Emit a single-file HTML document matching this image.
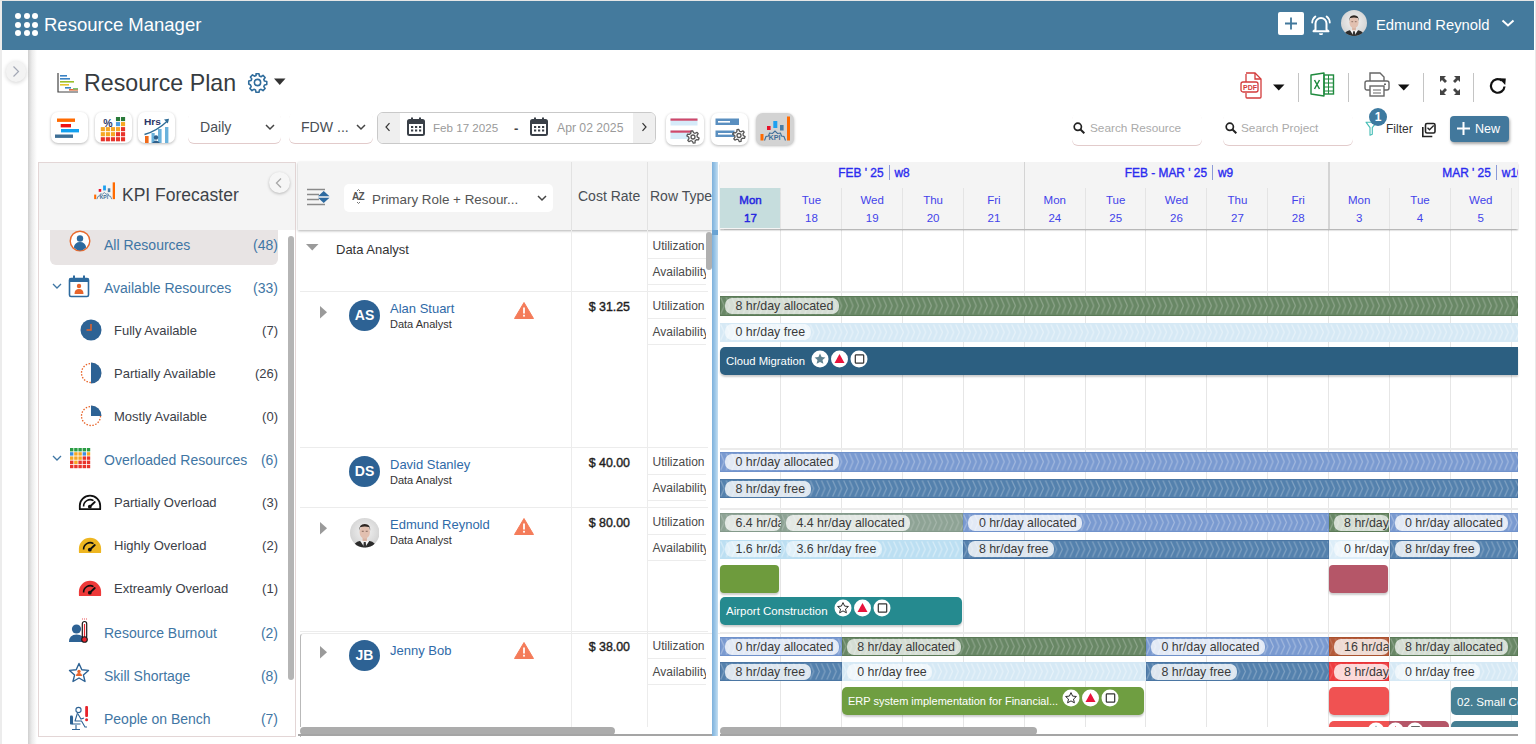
<!DOCTYPE html><html><head><meta charset="utf-8"><style>
*{box-sizing:border-box;margin:0;padding:0}
html,body{width:1536px;height:744px;overflow:hidden;background:#fff;font-family:"Liberation Sans",sans-serif;color:#333}
.a{position:absolute}
.t{position:absolute;white-space:nowrap;line-height:1}
.dot{position:absolute;width:6px;height:6px;border-radius:50%;background:#fff}
.kl{position:absolute;font-size:14px;color:#3f76a4;white-space:nowrap;line-height:1}
.ks{position:absolute;font-size:13px;color:#3b4048;white-space:nowrap;line-height:1}
.tb{position:absolute;border-radius:7px;background:#fff;box-shadow:0 1px 3px rgba(0,0,0,.28)}
.bar{position:absolute;overflow:hidden}
.pill{position:absolute;height:16px;top:2px;left:5px;border-radius:7px;font-size:12.4px;line-height:16px;padding-left:10.5px;padding-right:5.5px;color:#333;white-space:nowrap;overflow:hidden}
.dh{position:absolute;font-size:11.5px;color:#4343ea;text-align:center;width:61px;line-height:1}
</style></head><body><svg width="0" height="0" style="position:absolute"><defs><pattern id="p0" patternUnits="userSpaceOnUse" width="5.6" height="19.5"><path d="M0.6 1.5L4.2 9.75L0.6 18.0" fill="none" stroke="rgba(255,255,255,.24)" stroke-width="1.2"/></pattern><pattern id="p1" patternUnits="userSpaceOnUse" width="5.6" height="18.5"><path d="M0.6 1.5L4.2 9.25L0.6 17.0" fill="none" stroke="rgba(255,255,255,.4)" stroke-width="1.2"/></pattern><pattern id="p2" patternUnits="userSpaceOnUse" width="5.6" height="19.5"><path d="M0.6 1.5L4.2 9.75L0.6 18.0" fill="none" stroke="rgba(255,255,255,.3)" stroke-width="1.2"/></pattern><pattern id="p3" patternUnits="userSpaceOnUse" width="5.6" height="19.0"><path d="M0.6 1.5L4.2 9.5L0.6 17.5" fill="none" stroke="rgba(255,255,255,.26)" stroke-width="1.2"/></pattern><pattern id="p4" patternUnits="userSpaceOnUse" width="5.6" height="19.0"><path d="M0.6 1.5L4.2 9.5L0.6 17.5" fill="none" stroke="rgba(255,255,255,.2)" stroke-width="1.2"/></pattern><pattern id="p5" patternUnits="userSpaceOnUse" width="5.6" height="19.0"><path d="M0.6 1.5L4.2 9.5L0.6 17.5" fill="none" stroke="rgba(255,255,255,.3)" stroke-width="1.2"/></pattern><pattern id="p6" patternUnits="userSpaceOnUse" width="5.6" height="19.0"><path d="M0.6 1.5L4.2 9.5L0.6 17.5" fill="none" stroke="rgba(255,255,255,.24)" stroke-width="1.2"/></pattern><pattern id="p7" patternUnits="userSpaceOnUse" width="5.6" height="18.5"><path d="M0.6 1.5L4.2 9.25L0.6 17.0" fill="none" stroke="rgba(255,255,255,.26)" stroke-width="1.2"/></pattern><pattern id="p8" patternUnits="userSpaceOnUse" width="5.6" height="19.0"><path d="M0.6 1.5L4.2 9.5L0.6 17.5" fill="none" stroke="rgba(255,255,255,.15)" stroke-width="1.2"/></pattern><pattern id="p9" patternUnits="userSpaceOnUse" width="5.6" height="19.0"><path d="M0.6 1.5L4.2 9.5L0.6 17.5" fill="none" stroke="rgba(255,255,255,.4)" stroke-width="1.2"/></pattern></defs></svg><div class="a" style="left:0px;top:0px;width:2px;height:744px;background:#ececec;"></div>
<div class="a" style="left:1535px;top:0px;width:1px;height:744px;background:#e9e9e9;"></div>
<div class="a" style="left:0px;top:0px;width:1536px;height:1px;background:#e6e6e6;"></div>
<div class="a" style="left:2px;top:1px;width:1532px;height:49px;background:#447a9d;"></div>
<div class="dot" style="left:15.0px;top:13.0px"></div>
<div class="dot" style="left:23.5px;top:13.0px"></div>
<div class="dot" style="left:32.0px;top:13.0px"></div>
<div class="dot" style="left:15.0px;top:21.5px"></div>
<div class="dot" style="left:23.5px;top:21.5px"></div>
<div class="dot" style="left:32.0px;top:21.5px"></div>
<div class="dot" style="left:15.0px;top:30.0px"></div>
<div class="dot" style="left:23.5px;top:30.0px"></div>
<div class="dot" style="left:32.0px;top:30.0px"></div>
<div class="t" style="left:44px;top:16px;font-size:18.5px;color:#fff;">Resource Manager</div>
<div class="a" style="left:1278px;top:12px;width:26px;height:23px;background:#fff;border-radius:2px"></div>
<svg class="a" style="left:1278px;top:12px" width="26" height="23"><path d="M13 5.5v12M7 11.5h12" stroke="#42789c" stroke-width="1.8"/></svg>
<svg class="a" style="left:1310px;top:13px" width="22" height="22" viewBox="0 0 22 22"><path d="M5.5 16.5V10.5a5.5 5.5 0 0 1 11 0v6l2 1.8h-15z" fill="none" stroke="#fff" stroke-width="2" stroke-linejoin="round"/><path d="M9 20.2a2 2 0 0 0 4 0z" fill="#fff"/><path d="M2.2 9.5a8 8 0 0 1 3.2-6M19.8 9.5a8 8 0 0 0-3.2-6" fill="none" stroke="#fff" stroke-width="1.8" stroke-linecap="round"/></svg>
<svg class="a" style="left:1341px;top:10px" width="26" height="26" viewBox="0 0 30 30"><defs><clipPath id="av1"><circle cx="15" cy="15" r="15"/></clipPath><radialGradient id="av1g" cx=".5" cy=".45" r=".6"><stop offset="0" stop-color="#f4f4f4"/><stop offset="1" stop-color="#cfcfcf"/></radialGradient></defs><g clip-path="url(#av1)"><rect width="30" height="30" fill="url(#av1g)"/><path d="M3 31q1-6.5 7-7.5l5 1.5 5-1.5q6 1 7 7.5z" fill="#2b2b2b"/><path d="M10.5 23.5l4.5 7 4.5-7-4.5-1.5z" fill="#f5f5f5"/><path d="M14 24.5h2l.6 5.5h-3.2z" fill="#333"/><rect x="12.8" y="19" width="4.4" height="4.5" fill="#d9b3a1"/><ellipse cx="15" cy="14.2" rx="5.3" ry="6.8" fill="#e2c0b0"/><path d="M9.5 13q-.5-6.5 5.5-6.8 6 .3 5.5 6.8l-.8-3.5q-4.7-1.8-9.4 0z" fill="#2e2622"/><path d="M12 13.5h2M16 13.5h2" stroke="#6b5046" stroke-width=".8"/></g></svg>
<div class="t" style="left:1376px;top:17.5px;font-size:14.8px;color:#fff;">Edmund Reynold</div>
<svg class="a" style="left:1501px;top:19px" width="14" height="9"><path d="M1.5 1.5l5.5 5 5.5-5" fill="none" stroke="#fff" stroke-width="2"/></svg>
<div class="a" style="left:28px;top:50px;width:9px;height:694px;background:linear-gradient(90deg,#cfcfcf,#ececec 45%,#fff);"></div>
<div class="a" style="left:5.5px;top:61px;width:20.5px;height:20.5px;border-radius:50%;background:#f3f3f3;box-shadow:0 1px 4px rgba(0,0,0,.18)"></div>
<svg class="a" style="left:12px;top:65px" width="10" height="13"><path d="M1.5 1.5l5 5-5 5" fill="none" stroke="#a3a8b5" stroke-width="1.2"/></svg>
<svg class="a" style="left:57px;top:73px" width="22" height="20" viewBox="0 0 22 20"><path d="M1 0v19h20" fill="none" stroke="#444" stroke-width="1.2"/><rect x="3" y="2" width="7" height="1.6" fill="#3b83c4"/><rect x="3" y="5" width="10" height="1.6" fill="#3b83c4"/><rect x="3" y="8" width="14" height="1.6" fill="#9bbf2a"/><rect x="3" y="11" width="9" height="1.6" fill="#e3c530"/><rect x="8" y="14" width="6" height="1.6" fill="#3b83c4"/><rect x="12" y="16" width="9" height="1.6" fill="#e06a3a"/><rect x="16" y="15" width="5" height="1.6" fill="#7cc576"/></svg>
<div class="t" style="left:84px;top:72px;font-size:23.2px;color:#363b40;">Resource Plan</div>
<svg class="a" style="left:247px;top:72px" width="21" height="21" viewBox="0 0 24 24"><path d="M10.3 2h3.4l.5 2.6 1.9.8 2.2-1.5 2.4 2.4-1.5 2.2.8 1.9 2.6.5v3.4l-2.6.5-.8 1.9 1.5 2.2-2.4 2.4-2.2-1.5-1.9.8-.5 2.6h-3.4l-.5-2.6-1.9-.8-2.2 1.5-2.4-2.4 1.5-2.2-.8-1.9L2 13.7v-3.4l2.6-.5.8-1.9-1.5-2.2 2.4-2.4 2.2 1.5 1.9-.8z" fill="none" stroke="#2f6c9c" stroke-width="1.8" stroke-linejoin="round"/><circle cx="12" cy="12" r="3.6" fill="none" stroke="#2f6c9c" stroke-width="1.8"/></svg>
<svg class="a" style="left:274px;top:78px" width="12" height="8"><path d="M0 .5h11.5L5.75 7z" fill="#333"/></svg>
<div class="tb" style="left:51px;top:112px;width:37px;height:31px"></div>
<svg class="a" style="left:50px;top:112px" width="38" height="31"><rect x="7" y="6.5" width="18" height="3.4" fill="#ff6a00"/><rect x="10.7" y="12" width="10.3" height="3.4" fill="#ee1111"/><rect x="11" y="17" width="18" height="3.4" fill="#11a0f0"/><rect x="5" y="22.5" width="18" height="3.4" fill="#3e6f96"/></svg>
<div class="tb" style="left:95px;top:112px;width:37px;height:31px"></div>
<svg class="a" style="left:95px;top:112px" width="37" height="31"><text x="8.2" y="14.5" font-size="10.5" font-weight="bold" fill="#2c3a6a" font-family="Liberation Sans">%</text><rect x="20.95" y="5.00" width="4.1" height="4.1" fill="#2a7a3a"/><rect x="26.00" y="5.00" width="4.1" height="4.1" fill="#2a7a3a"/><rect x="20.95" y="10.05" width="4.1" height="4.1" fill="#4a9ee0"/><rect x="26.00" y="10.05" width="4.1" height="4.1" fill="#f5a623"/><rect x="5.80" y="15.10" width="4.1" height="4.1" fill="#f5a623"/><rect x="10.85" y="15.10" width="4.1" height="4.1" fill="#f5a623"/><rect x="15.90" y="15.10" width="4.1" height="4.1" fill="#f5a623"/><rect x="20.95" y="15.10" width="4.1" height="4.1" fill="#f5a623"/><rect x="26.00" y="15.10" width="4.1" height="4.1" fill="#e8342b"/><rect x="5.80" y="20.15" width="4.1" height="4.1" fill="#f5a623"/><rect x="10.85" y="20.15" width="4.1" height="4.1" fill="#f5a623"/><rect x="15.90" y="20.15" width="4.1" height="4.1" fill="#f5a623"/><rect x="20.95" y="20.15" width="4.1" height="4.1" fill="#e8342b"/><rect x="26.00" y="20.15" width="4.1" height="4.1" fill="#e8342b"/><rect x="5.80" y="25.20" width="4.1" height="4.1" fill="#e8342b"/><rect x="10.85" y="25.20" width="4.1" height="4.1" fill="#e8342b"/><rect x="15.90" y="25.20" width="4.1" height="4.1" fill="#e8342b"/><rect x="20.95" y="25.20" width="4.1" height="4.1" fill="#e8342b"/><rect x="26.00" y="25.20" width="4.1" height="4.1" fill="#e8342b"/></svg>
<div class="tb" style="left:138px;top:112px;width:37px;height:31px"></div>
<svg class="a" style="left:138px;top:112px" width="37" height="31"><text x="6" y="12.5" font-size="9.6" font-weight="bold" fill="#2c3466" font-family="Liberation Sans" textLength="17" lengthAdjust="spacingAndGlyphs">Hrs</text><rect x="7" y="24" width="3.6" height="7" fill="#f06a1a"/><rect x="13.5" y="21" width="3.2" height="10" fill="#6ab2dc"/><rect x="20" y="17" width="3.6" height="14" fill="#6ab2dc"/><rect x="27" y="15" width="3.4" height="16" fill="#6ab2dc"/><path d="M6.5 22.5Q19 19 30 8.5" fill="none" stroke="#2f6c96" stroke-width="1.3"/><path d="M26 7.5l5-.8-1.2 4.8z" fill="#2f6c96"/><circle cx="18" cy="25.5" r="2.2" fill="#2f5f8a"/><path d="M14 31q4-5 8 0z" fill="#2f5f8a"/></svg>
<div class="a" style="left:188px;top:112px;width:93px;height:31px;border-radius:6px;background:#fff;box-shadow:0 1px 0 rgba(190,140,140,.45)"></div>
<div class="t" style="left:200px;top:120px;font-size:14.1px;color:#4a4f55;">Daily</div>
<svg class="a" style="left:265px;top:124px" width="10" height="7"><path d="M1 1l4 4 4-4" fill="none" stroke="#444" stroke-width="1.5"/></svg>
<div class="a" style="left:289px;top:112px;width:84px;height:31px;border-radius:6px;background:#fff;box-shadow:0 1px 0 rgba(190,140,140,.45)"></div>
<div class="t" style="left:301px;top:120px;font-size:14.1px;color:#4a4f55;">FDW ...</div>
<svg class="a" style="left:356px;top:124px" width="10" height="7"><path d="M1 1l4 4 4-4" fill="none" stroke="#444" stroke-width="1.5"/></svg>
<div class="a" style="left:377px;top:112px;width:279px;height:32px;border:1px solid #c9c9c9;border-radius:6px;background:#fff;overflow:hidden"><div class="a" style="left:0;top:0;width:22px;height:30px;background:#efefef"></div><div class="a" style="right:0;top:0;width:22px;height:30px;background:#efefef"></div></div>
<svg class="a" style="left:384px;top:122px" width="8" height="10"><path d="M5.5 1.2L2 5l3.5 3.8" fill="none" stroke="#333" stroke-width="1.2"/></svg>
<svg class="a" style="left:640px;top:122px" width="8" height="10"><path d="M2.5 1.2L6 5l-3.5 3.8" fill="none" stroke="#333" stroke-width="1.2"/></svg>
<svg class="a" style="left:407px;top:117px" width="18" height="19" viewBox="0 0 18 19"><rect x="1" y="3" width="16" height="15" rx="1.5" fill="none" stroke="#3a4048" stroke-width="2"/><rect x="1" y="3" width="16" height="4" fill="#3a4048"/><rect x="4" y="0.5" width="2" height="4" fill="#3a4048"/><rect x="12" y="0.5" width="2" height="4" fill="#3a4048"/><rect x="4" y="9.0" width="2.2" height="2" fill="#3a4048"/><rect x="8" y="9.0" width="2.2" height="2" fill="#3a4048"/><rect x="12" y="9.0" width="2.2" height="2" fill="#3a4048"/><rect x="4" y="12.5" width="2.2" height="2" fill="#3a4048"/><rect x="8" y="12.5" width="2.2" height="2" fill="#3a4048"/><rect x="12" y="12.5" width="2.2" height="2" fill="#3a4048"/></svg>
<svg class="a" style="left:530px;top:117px" width="18" height="19" viewBox="0 0 18 19"><rect x="1" y="3" width="16" height="15" rx="1.5" fill="none" stroke="#3a4048" stroke-width="2"/><rect x="1" y="3" width="16" height="4" fill="#3a4048"/><rect x="4" y="0.5" width="2" height="4" fill="#3a4048"/><rect x="12" y="0.5" width="2" height="4" fill="#3a4048"/><rect x="4" y="9.0" width="2.2" height="2" fill="#3a4048"/><rect x="8" y="9.0" width="2.2" height="2" fill="#3a4048"/><rect x="12" y="9.0" width="2.2" height="2" fill="#3a4048"/><rect x="4" y="12.5" width="2.2" height="2" fill="#3a4048"/><rect x="8" y="12.5" width="2.2" height="2" fill="#3a4048"/><rect x="12" y="12.5" width="2.2" height="2" fill="#3a4048"/></svg>
<div class="t" style="left:433px;top:122px;font-size:11.6px;color:#9a9a9a;">Feb 17 2025</div>
<div class="t" style="left:514px;top:121.5px;font-size:13px;color:#444;font-weight:bold">-</div>
<div class="t" style="left:557px;top:122px;font-size:12.2px;color:#9a9a9a;">Apr 02 2025</div>
<div class="tb" style="left:666px;top:113px;width:38px;height:32px"></div>
<svg class="a" style="left:666px;top:113px" width="38" height="32"><rect x="4.5" y="5.5" width="27" height="7" fill="#d6ebf9"/><rect x="4.5" y="5.5" width="27" height="2.2" fill="#d0486a"/><rect x="4.5" y="17.5" width="22" height="8.5" fill="#d6ebf9"/><rect x="4.5" y="17.5" width="22" height="2.2" fill="#d0486a"/><path d="M31.30 24.00 L33.09 25.16 L32.52 26.81 L30.40 26.64 L29.15 27.72 L29.04 29.86 L27.32 30.19 L26.42 28.26 L24.85 27.72 L22.95 28.69 L21.80 27.38 L23.02 25.62 L22.70 24.00 L20.91 22.84 L21.48 21.19 L23.60 21.36 L24.85 20.28 L24.96 18.14 L26.68 17.81 L27.58 19.74 L29.15 20.28 L31.05 19.31 L32.20 20.62 L30.98 22.38Z" fill="#fff" stroke="#555" stroke-width="1.3" stroke-linejoin="round"/><circle cx="27" cy="24" r="2.0" fill="none" stroke="#555" stroke-width="1.3"/></svg>
<div class="tb" style="left:711px;top:113px;width:37px;height:32px"></div>
<svg class="a" style="left:711px;top:113px" width="37" height="32"><rect x="4.5" y="5.5" width="23.5" height="6.5" fill="#5a8fc0"/><rect x="7" y="8" width="12" height="1.6" fill="#fff"/><rect x="4.5" y="17.5" width="19" height="6.5" fill="#5a8fc0"/><rect x="7" y="20" width="14" height="1.6" fill="#fff"/><path d="M32.30 22.50 L34.09 23.66 L33.52 25.31 L31.40 25.14 L30.15 26.22 L30.04 28.36 L28.32 28.69 L27.42 26.76 L25.85 26.22 L23.95 27.19 L22.80 25.88 L24.02 24.12 L23.70 22.50 L21.91 21.34 L22.48 19.69 L24.60 19.86 L25.85 18.78 L25.96 16.64 L27.68 16.31 L28.58 18.24 L30.15 18.78 L32.05 17.81 L33.20 19.12 L31.98 20.88Z" fill="#fff" stroke="#555" stroke-width="1.3" stroke-linejoin="round"/><circle cx="28" cy="22.5" r="2.0" fill="none" stroke="#555" stroke-width="1.3"/></svg>
<div class="tb" style="left:756px;top:113px;width:38px;height:32px;background:#d3d3d3"></div>
<svg class="a" style="left:756px;top:116px" width="34" height="26" viewBox="0 0 34 26"><rect x="4.5" y="18" width="3" height="6.5" fill="#ff6a00"/><rect x="31" y="0.5" width="3.6" height="24" fill="#ff6a00"/><rect x="11" y="10" width="3.6" height="4" fill="#e8102a"/><rect x="17.3" y="5" width="4" height="7" fill="#1ea0f0"/><rect x="24" y="9" width="3.6" height="5.5" fill="#4a7ea8"/><path d="M8.5 24.5l1.5-4 2.5-.5 1-3 3 .5 2.5-2.5 2.5 2.5 3-.5 1 3 2.5.5 1.5 4" fill="none" stroke="#3d6e98" stroke-width="1.1"/><text x="12.5" y="24" font-size="7.2" font-weight="bold" fill="#3d6e98" font-family="Liberation Sans">KPI</text></svg>
<svg class="a" style="left:1240px;top:72px" width="26" height="27" viewBox="0 0 26 27"><path d="M6 1h9l6 6v18a1 1 0 0 1-1 1H7a1 1 0 0 1-1-1v-4" fill="none" stroke="#d33b3b" stroke-width="1.3"/><path d="M15 1v6h6" fill="none" stroke="#d33b3b" stroke-width="1.3"/><path d="M6 10V2" stroke="#d33b3b" stroke-width="1.3"/><rect x="1" y="10" width="17" height="10" rx="2" fill="#fff" stroke="#d33b3b" stroke-width="1.3"/><text x="3" y="18" font-size="7" font-weight="bold" fill="#d33b3b" font-family="Liberation Sans">PDF</text></svg>
<svg class="a" style="left:1273px;top:84px" width="12" height="7"><path d="M0 .5h11.5L5.75 6.5z" fill="#111"/></svg>
<div class="a" style="left:1298px;top:73px;width:1px;height:29px;background:#c4c4c4;"></div>
<svg class="a" style="left:1310px;top:72px" width="25" height="25" viewBox="0 0 25 25"><path d="M1 3l13-2v23L1 22z" fill="#fff" stroke="#1f8a3e" stroke-width="1.4" stroke-linejoin="round"/><rect x="14" y="3" width="9.5" height="19" fill="none" stroke="#1f8a3e" stroke-width="1.4"/><path d="M14 7h9.5M14 11h9.5M14 15h9.5M14 19h9.5M18.5 3v19" stroke="#1f8a3e" stroke-width="1"/><path d="M4.5 8l5 9M9.5 8l-5 9" stroke="#1f8a3e" stroke-width="1.5"/></svg>
<div class="a" style="left:1348px;top:73px;width:1px;height:29px;background:#c4c4c4;"></div>
<svg class="a" style="left:1364px;top:72px" width="26" height="25" viewBox="0 0 26 25"><path d="M6 9V1h10l4 4v4" fill="none" stroke="#666" stroke-width="1.4"/><rect x="1" y="9" width="24" height="9" rx="2" fill="none" stroke="#666" stroke-width="1.4"/><rect x="6" y="14" width="14" height="10" fill="#fff" stroke="#666" stroke-width="1.4"/><path d="M9 18h8M9 21h8" stroke="#666" stroke-width="1.2"/><rect x="20" y="11.5" width="2" height="1.5" fill="#666"/></svg>
<svg class="a" style="left:1398px;top:84px" width="12" height="7"><path d="M0 .5h11.5L5.75 6.5z" fill="#111"/></svg>
<div class="a" style="left:1423px;top:73px;width:1px;height:29px;background:#c4c4c4;"></div>
<svg class="a" style="left:1439px;top:75px" width="22" height="21" viewBox="0 0 22 21"><g fill="#444"><path d="M1 1h6L5 3l3 3-2 2-3-3-2 2z"/><path d="M21 1h-6l2 2-3 3 2 2 3-3 2 2z"/><path d="M1 20h6l-2-2 3-3-2-2-3 3-2-2z"/><path d="M21 20h-6l2-2-3-3 2-2 3 3 2-2z"/></g></svg>
<div class="a" style="left:1473px;top:73px;width:1px;height:29px;background:#c4c4c4;"></div>
<svg class="a" style="left:1488px;top:76px" width="20" height="20" viewBox="0 0 20 20"><path d="M16.5 10.5A6.8 6.8 0 1 1 13.8 4.5" fill="none" stroke="#111" stroke-width="2.2"/><path d="M11 2.2l6.8.2-.6 6.6z" fill="#111"/></svg>
<div class="a" style="left:1072px;top:113px;width:130px;height:32px;border-radius:6px;background:#fff;box-shadow:0 1px 0 rgba(190,140,140,.45)"></div>
<svg class="a" style="left:1073px;top:122px" width="12" height="12"><circle cx="4.8" cy="4.8" r="3.6" fill="none" stroke="#222" stroke-width="1.7"/><path d="M7.5 7.5l3.8 3.8" stroke="#222" stroke-width="2"/></svg>
<div class="t" style="left:1090px;top:123px;font-size:11.8px;color:#aaa;">Search Resource</div>
<div class="a" style="left:1223px;top:113px;width:130px;height:32px;border-radius:6px;background:#fff;box-shadow:0 1px 0 rgba(190,140,140,.45)"></div>
<svg class="a" style="left:1225px;top:122px" width="12" height="12"><circle cx="4.8" cy="4.8" r="3.6" fill="none" stroke="#222" stroke-width="1.7"/><path d="M7.5 7.5l3.8 3.8" stroke="#222" stroke-width="2"/></svg>
<div class="t" style="left:1241px;top:123px;font-size:11.8px;color:#aaa;">Search Project</div>
<svg class="a" style="left:1365px;top:121px" width="13" height="15"><path d="M1 1.2h10.5L7.3 6.6v6.6L5 14.2V6.6z" fill="none" stroke="#45bdb5" stroke-width="1.1" stroke-linejoin="round"/></svg>
<div class="a" style="left:1369px;top:108px;width:18px;height:18px;border-radius:50%;background:#3d7aa0;color:#fff;font-size:12px;font-weight:bold;text-align:center;line-height:18px">1</div>
<div class="t" style="left:1386px;top:122.5px;font-size:12px;color:#333;">Filter</div>
<svg class="a" style="left:1421px;top:122px" width="16" height="16"><path d="M1.8 5v9.5h9.5" fill="none" stroke="#222" stroke-width="1.6"/><rect x="4.5" y="1.5" width="9.5" height="9.5" rx="1.5" fill="#fff" stroke="#222" stroke-width="1.6"/><path d="M6.5 5.8l2 2 4.2-4.3" fill="none" stroke="#222" stroke-width="1.3"/></svg>
<div class="a" style="left:1450px;top:116px;width:59px;height:26px;border-radius:4px;background:#42789c;box-shadow:1px 2px 3px rgba(0,0,0,.35)"></div>
<svg class="a" style="left:1456px;top:121px" width="15" height="15"><path d="M7.5 1v13M1 7.5h13" stroke="#fff" stroke-width="2"/></svg>
<div class="t" style="left:1475px;top:123px;font-size:12.5px;color:#fff;">New</div>
<div class="a" style="left:38px;top:162px;width:258px;height:575px;border:1px solid #e3d6d6;background:#fff"></div>
<div class="a" style="left:39px;top:163px;width:256px;height:67px;background:#f4f4f4;"></div>
<svg class="a" style="left:91px;top:182px" width="23.799999999999997" height="18.2" viewBox="0 0 34 26"><rect x="4.5" y="18" width="3" height="6.5" fill="#ff6a00"/><rect x="31" y="0.5" width="3.6" height="24" fill="#ff6a00"/><rect x="11" y="10" width="3.6" height="4" fill="#e8102a"/><rect x="17.3" y="5" width="4" height="7" fill="#1ea0f0"/><rect x="24" y="9" width="3.6" height="5.5" fill="#4a7ea8"/><path d="M8.5 24.5l1.5-4 2.5-.5 1-3 3 .5 2.5-2.5 2.5 2.5 3-.5 1 3 2.5.5 1.5 4" fill="none" stroke="#3d6e98" stroke-width="1.1"/><text x="12.5" y="24" font-size="7.2" font-weight="bold" fill="#3d6e98" font-family="Liberation Sans">KPI</text></svg>
<div class="t" style="left:122px;top:187px;font-size:17.5px;color:#3d4349;">KPI Forecaster</div>
<div class="a" style="left:269px;top:172px;width:21px;height:21px;border-radius:50%;background:#f6f6f6;box-shadow:0 1px 3px rgba(0,0,0,.25)"></div>
<svg class="a" style="left:274px;top:177px" width="10" height="12"><path d="M7 1.5L2.5 6 7 10.5" fill="none" stroke="#aaa" stroke-width="1.4"/></svg>
<div class="a" style="left:287px;top:230px;width:8px;height:506px;background:#fff;"></div>
<div class="a" style="left:288px;top:236px;width:6px;height:444px;background:#b5b5b5;border-radius:3px"></div>
<div class="a" style="left:50px;top:230px;width:228px;height:35px;background:#e8e4e4;border-radius:0 0 6px 6px"></div>
<svg class="a" style="left:69px;top:230px" width="22" height="22" viewBox="0 0 22 22"><circle cx="11" cy="11" r="9.8" fill="#fff" stroke="#e86a2e" stroke-width="1.4"/><circle cx="11" cy="8.5" r="3.2" fill="#2d6a9e"/><path d="M4.8 17.5q1-5.5 6.2-5.5t6.2 5.5q-3 3-6.2 3t-6.2-3z" fill="#2d6a9e"/></svg>
<div class="kl" style="left:104px;top:238px">All Resources</div><div class="kl" style="right:1258px;top:238px">(48)</div>
<svg class="a" style="left:52px;top:283px" width="10" height="7"><path d="M1 1l4 4 4-4" fill="none" stroke="#3f76a4" stroke-width="1.3"/></svg>
<svg class="a" style="left:68px;top:275px" width="22" height="23" viewBox="0 0 22 23"><rect x="1.5" y="3.5" width="19" height="18" rx="1.5" fill="#fff" stroke="#2d6a9e" stroke-width="1.6"/><rect x="1.5" y="3.5" width="19" height="3.5" fill="#2d6a9e"/><rect x="5" y="0.5" width="2" height="5" fill="#2d6a9e"/><rect x="15" y="0.5" width="2" height="5" fill="#2d6a9e"/><circle cx="11" cy="11" r="2.2" fill="#e8642a"/><path d="M6.5 19q0-5 4.5-5t4.5 5z" fill="#e8642a"/></svg>
<div class="kl" style="left:104px;top:281px">Available Resources</div><div class="kl" style="right:1258px;top:281px">(33)</div>
<svg class="a" style="left:80px;top:319px" width="22" height="22" viewBox="0 0 22 22"><circle cx="11" cy="11" r="10.5" fill="#2d6294"/><path d="M11 5v6H6.5" fill="none" stroke="#e8642a" stroke-width="1.5"/></svg>
<div class="ks" style="left:114px;top:323.5px">Fully Available</div><div class="ks" style="right:1258px;top:323.5px">(7)</div>
<svg class="a" style="left:80px;top:362px" width="22" height="22" viewBox="0 0 22 22"><circle cx="11" cy="11" r="9.5" fill="none" stroke="#e8642a" stroke-width="1.3" stroke-dasharray="1.5 1.5"/><path d="M11 0.5a10.5 10.5 0 0 1 0 21z" fill="#2d6294"/></svg>
<div class="ks" style="left:114px;top:366.5px">Partially Available</div><div class="ks" style="right:1258px;top:366.5px">(26)</div>
<svg class="a" style="left:80px;top:405px" width="22" height="22" viewBox="0 0 22 22"><circle cx="11" cy="11" r="9.5" fill="none" stroke="#e8642a" stroke-width="1.3" stroke-dasharray="1.5 1.5"/><path d="M11 11V0.5a10.5 10.5 0 0 1 10.5 10.5z" fill="#2d6294"/></svg>
<div class="ks" style="left:114px;top:409.5px">Mostly Available</div><div class="ks" style="right:1258px;top:409.5px">(0)</div>
<svg class="a" style="left:52px;top:455px" width="10" height="7"><path d="M1 1l4 4 4-4" fill="none" stroke="#3f76a4" stroke-width="1.3"/></svg>
<svg class="a" style="left:69px;top:447px" width="22" height="22" viewBox="0 0 22 22"><rect x="1.0" y="1.0" width="3.4" height="3.4" fill="#2a9d44"/><rect x="5.2" y="1.0" width="3.4" height="3.4" fill="#2a9d44"/><rect x="9.4" y="1.0" width="3.4" height="3.4" fill="#2a9d44"/><rect x="13.6" y="1.0" width="3.4" height="3.4" fill="#2a9d44"/><rect x="17.8" y="1.0" width="3.4" height="3.4" fill="#2a9d44"/><rect x="1.0" y="5.2" width="3.4" height="3.4" fill="#3d8fe0"/><rect x="5.2" y="5.2" width="3.4" height="3.4" fill="#f5a623"/><rect x="9.4" y="5.2" width="3.4" height="3.4" fill="#f5a623"/><rect x="13.6" y="5.2" width="3.4" height="3.4" fill="#3d8fe0"/><rect x="17.8" y="5.2" width="3.4" height="3.4" fill="#f5a623"/><rect x="1.0" y="9.4" width="3.4" height="3.4" fill="#f5a623"/><rect x="5.2" y="9.4" width="3.4" height="3.4" fill="#f5a623"/><rect x="9.4" y="9.4" width="3.4" height="3.4" fill="#f5a623"/><rect x="13.6" y="9.4" width="3.4" height="3.4" fill="#e8342b"/><rect x="17.8" y="9.4" width="3.4" height="3.4" fill="#e8342b"/><rect x="1.0" y="13.6" width="3.4" height="3.4" fill="#e8342b"/><rect x="5.2" y="13.6" width="3.4" height="3.4" fill="#f5a623"/><rect x="9.4" y="13.6" width="3.4" height="3.4" fill="#e8342b"/><rect x="13.6" y="13.6" width="3.4" height="3.4" fill="#e8342b"/><rect x="17.8" y="13.6" width="3.4" height="3.4" fill="#e8342b"/><rect x="1.0" y="17.8" width="3.4" height="3.4" fill="#e8342b"/><rect x="5.2" y="17.8" width="3.4" height="3.4" fill="#e8342b"/><rect x="9.4" y="17.8" width="3.4" height="3.4" fill="#e8342b"/><rect x="13.6" y="17.8" width="3.4" height="3.4" fill="#e8342b"/><rect x="17.8" y="17.8" width="3.4" height="3.4" fill="#e8342b"/></svg>
<div class="kl" style="left:104px;top:453px">Overloaded Resources</div><div class="kl" style="right:1258px;top:453px">(6)</div>
<svg class="a" style="left:78px;top:494px" width="24" height="17" viewBox="0 0 24 17"><path d="M1.8 15.2V11.5A10.2 9.8 0 0 1 22.2 11.5V15.2Z" fill="#fff" stroke="#111" stroke-width="1.8" stroke-linejoin="round"/><path d="M5.6 12.5A6.6 6.6 0 0 1 15.5 6.6" fill="none" stroke="#111" stroke-width="1.6"/><path d="M12 12.5L16.8 8" stroke="#111" stroke-width="1.8" stroke-linecap="round"/><circle cx="11.8" cy="12.7" r="1.9" fill="#111"/></svg>
<div class="ks" style="left:114px;top:495.5px">Partially Overload</div><div class="ks" style="right:1258px;top:495.5px">(3)</div>
<svg class="a" style="left:78px;top:537px" width="24" height="17" viewBox="0 0 24 17"><path d="M1.8 15.2V11.5A10.2 9.8 0 0 1 22.2 11.5V15.2Z" fill="#eeb621" stroke="#eeb621" stroke-width="1.8" stroke-linejoin="round"/><path d="M5.6 12.5A6.6 6.6 0 0 1 15.5 6.6" fill="none" stroke="#111" stroke-width="1.6"/><path d="M12 12.5L16.8 8" stroke="#111" stroke-width="1.8" stroke-linecap="round"/><circle cx="11.8" cy="12.7" r="1.9" fill="#111"/></svg>
<div class="ks" style="left:114px;top:538.5px">Highly Overload</div><div class="ks" style="right:1258px;top:538.5px">(2)</div>
<svg class="a" style="left:78px;top:580px" width="24" height="17" viewBox="0 0 24 17"><path d="M1.8 15.2V11.5A10.2 9.8 0 0 1 22.2 11.5V15.2Z" fill="#ee3a3a" stroke="#ee3a3a" stroke-width="1.8" stroke-linejoin="round"/><path d="M5.6 12.5A6.6 6.6 0 0 1 15.5 6.6" fill="none" stroke="#111" stroke-width="1.6"/><path d="M12 12.5L16.8 8" stroke="#111" stroke-width="1.8" stroke-linecap="round"/><circle cx="11.8" cy="12.7" r="1.9" fill="#111"/></svg>
<div class="ks" style="left:114px;top:581.5px">Extreamly Overload</div><div class="ks" style="right:1258px;top:581.5px">(1)</div>
<svg class="a" style="left:68px;top:618px" width="24" height="26" viewBox="0 0 24 26"><circle cx="8.5" cy="11" r="4.6" fill="#2d6294"/><path d="M1 24q0-7.5 7.5-7.5 4 0 6 2V24z" fill="#2d6294"/><rect x="14.3" y="3.5" width="4.4" height="17" rx="2.2" fill="#fff" stroke="#1a1a1a" stroke-width="1.2"/><rect x="15.9" y="6" width="1.2" height="13" fill="#e8242b"/><circle cx="16.5" cy="21.5" r="2.8" fill="#e8242b" stroke="#1a1a1a" stroke-width="1.1"/><path d="M14 1h1M16 1h1M18 1h1" stroke="#e8242b" stroke-width=".8"/></svg>
<div class="kl" style="left:104px;top:626px">Resource Burnout</div><div class="kl" style="right:1258px;top:626px">(2)</div>
<svg class="a" style="left:68px;top:662px" width="22" height="22" viewBox="0 0 22 22"><path d="M11 1.5l2.8 6.3 6.7.6-5.1 4.5 1.6 6.6L11 16l-6 3.5 1.6-6.6L1.5 8.4l6.7-.6z" fill="#fff" stroke="#2d6294" stroke-width="1.4" stroke-linejoin="round"/><circle cx="11" cy="9.5" r="1.7" fill="#e8642a"/><path d="M8 14q0-3 3-3t3 3z" fill="#e8642a"/></svg>
<div class="kl" style="left:104px;top:669px">Skill Shortage</div><div class="kl" style="right:1258px;top:669px">(8)</div>
<svg class="a" style="left:68px;top:705px" width="24" height="26" viewBox="0 0 24 26"><circle cx="10.5" cy="5" r="2.6" fill="none" stroke="#2d6294" stroke-width="1.1"/><path d="M9.5 8l-2.5 8h6.5l3.5 6h2" fill="none" stroke="#2d6294" stroke-width="1.1" stroke-linejoin="round"/><path d="M10 9l3 5 3-1" fill="none" stroke="#2d6294" stroke-width="1.1"/><path d="M4.5 12v7h8" fill="none" stroke="#2d6294" stroke-width="1.1"/><rect x="2" y="10.5" width="2.8" height="9" rx=".8" fill="#2d6294"/><path d="M8 20v4M4 24.5h8" stroke="#2d6294" stroke-width="1.1"/><rect x="17.2" y="1" width="2.8" height="11" rx="1" fill="#e8242b"/><circle cx="18.6" cy="14.8" r="1.5" fill="#e8242b"/></svg>
<div class="kl" style="left:104px;top:712px">People on Bench</div><div class="kl" style="right:1258px;top:712px">(7)</div>
<div class="a" style="left:298px;top:162px;width:414px;height:573px;background:#fff;"></div>
<div class="a" style="left:298px;top:162px;width:414px;height:68px;background:#f4f4f4;box-shadow:0 1px 2.5px rgba(0,0,0,.3)"></div>
<div class="a" style="left:571px;top:162px;width:1px;height:68px;background:#e2e2e2;"></div>
<div class="a" style="left:647px;top:162px;width:1px;height:68px;background:#e2e2e2;"></div>
<svg class="a" style="left:306px;top:187px" width="26" height="20" viewBox="0 0 26 20"><path d="M1 2.5h18M1 7.5h12M1 12.5h12M1 17.5h18" stroke="#8a8a8a" stroke-width="1.5"/><path d="M12 9.3L17.7 4l5.8 5.3z" fill="#2d6aa0"/><path d="M12 10.7L17.7 16l5.8-5.3z" fill="#2d6aa0"/></svg>
<div class="a" style="left:344px;top:184px;width:209px;height:28px;border-radius:5px;background:#fff"></div>
<svg class="a" style="left:352px;top:189px" width="15" height="16" viewBox="0 0 15 16"><text x="0" y="11" font-size="10" fill="#555" font-family="Liberation Sans" font-weight="bold">A</text><text x="6.5" y="11" font-size="10" fill="#555" font-family="Liberation Sans" font-weight="bold">Z</text><path d="M5 2l1.5-1.5L8 2M5 13l1.5 1.5L8 13" fill="none" stroke="#666" stroke-width=".9"/></svg>
<div class="t" style="left:372px;top:193px;font-size:13.4px;color:#555;">Primary Role + Resour...</div>
<svg class="a" style="left:537px;top:195px" width="10" height="7"><path d="M1 1l4 4 4-4" fill="none" stroke="#444" stroke-width="1.5"/></svg>
<div class="t" style="left:578px;top:189px;font-size:14px;color:#4a4f55;">Cost Rate</div>
<div class="a" style="left:648px;top:162px;width:64px;height:68px;overflow:hidden"><div class="t" style="left:2px;top:27px;font-size:14px;color:#4a4f55">Row Type</div></div>
<div class="a" style="left:571px;top:230px;width:1px;height:505px;background:#ececec;"></div>
<div class="a" style="left:647px;top:230px;width:1px;height:505px;background:#ececec;"></div>
<div class="a" style="left:300px;top:291px;width:408px;height:1.2px;background:#ececec;"></div>
<div class="a" style="left:300px;top:447px;width:408px;height:1.2px;background:#ececec;"></div>
<div class="a" style="left:300px;top:507px;width:408px;height:1.2px;background:#ececec;"></div>
<div class="a" style="left:300px;top:631px;width:408px;height:1.2px;background:#ececec;"></div>
<div class="a" style="left:648px;top:232px;width:58px;height:26px;overflow:hidden"><div class="t" style="left:4.5px;top:8px;font-size:12px;color:#4a4a4a">Utilization</div></div>
<div class="a" style="left:648px;top:258px;width:58px;height:1px;background:#ececec;"></div>
<div class="a" style="left:648px;top:258px;width:58px;height:26px;overflow:hidden"><div class="t" style="left:4.5px;top:8px;font-size:12px;color:#4a4a4a">Availability</div></div>
<div class="a" style="left:648px;top:284px;width:58px;height:1px;background:#ececec;"></div>
<div class="a" style="left:648px;top:292px;width:58px;height:26px;overflow:hidden"><div class="t" style="left:4.5px;top:8px;font-size:12px;color:#4a4a4a">Utilization</div></div>
<div class="a" style="left:648px;top:318px;width:58px;height:1px;background:#ececec;"></div>
<div class="a" style="left:648px;top:318px;width:58px;height:26px;overflow:hidden"><div class="t" style="left:4.5px;top:8px;font-size:12px;color:#4a4a4a">Availability</div></div>
<div class="a" style="left:648px;top:344px;width:58px;height:1px;background:#ececec;"></div>
<div class="a" style="left:648px;top:448px;width:58px;height:26px;overflow:hidden"><div class="t" style="left:4.5px;top:8px;font-size:12px;color:#4a4a4a">Utilization</div></div>
<div class="a" style="left:648px;top:474px;width:58px;height:1px;background:#ececec;"></div>
<div class="a" style="left:648px;top:474px;width:58px;height:26px;overflow:hidden"><div class="t" style="left:4.5px;top:8px;font-size:12px;color:#4a4a4a">Availability</div></div>
<div class="a" style="left:648px;top:500px;width:58px;height:1px;background:#ececec;"></div>
<div class="a" style="left:648px;top:508px;width:58px;height:26px;overflow:hidden"><div class="t" style="left:4.5px;top:8px;font-size:12px;color:#4a4a4a">Utilization</div></div>
<div class="a" style="left:648px;top:534px;width:58px;height:1px;background:#ececec;"></div>
<div class="a" style="left:648px;top:534px;width:58px;height:26px;overflow:hidden"><div class="t" style="left:4.5px;top:8px;font-size:12px;color:#4a4a4a">Availability</div></div>
<div class="a" style="left:648px;top:560px;width:58px;height:1px;background:#ececec;"></div>
<div class="a" style="left:648px;top:632px;width:58px;height:26px;overflow:hidden"><div class="t" style="left:4.5px;top:8px;font-size:12px;color:#4a4a4a">Utilization</div></div>
<div class="a" style="left:648px;top:658px;width:58px;height:1px;background:#ececec;"></div>
<div class="a" style="left:648px;top:658px;width:58px;height:26px;overflow:hidden"><div class="t" style="left:4.5px;top:8px;font-size:12px;color:#4a4a4a">Availability</div></div>
<div class="a" style="left:648px;top:684px;width:58px;height:1px;background:#ececec;"></div>
<svg class="a" style="left:306px;top:244px" width="13" height="7"><path d="M0 0h12.5L6.25 6.5z" fill="#9a9a9a"/></svg>
<div class="t" style="left:336px;top:243px;font-size:13px;color:#333;">Data Analyst</div>
<svg class="a" style="left:320px;top:306px" width="8" height="13"><path d="M0 0v12.5L7 6.25z" fill="#9a9a9a"/></svg>
<div class="a" style="left:349px;top:300px;width:31px;height:31px;border-radius:50%;background:#2d6294;color:#fff;font-size:14px;font-weight:bold;text-align:center;line-height:31px">AS</div>
<div class="t" style="left:390px;top:301.5px;font-size:13px;color:#2f6aa8;">Alan Stuart</div>
<div class="t" style="left:390px;top:319px;font-size:11px;color:#333;">Data Analyst</div>
<svg class="a" style="left:514px;top:302px" width="20" height="17" viewBox="0 0 20 17"><path d="M10 .5L19.5 16.5H.5z" fill="#f47c5a" stroke="#f47c5a" stroke-linejoin="round"/><rect x="9.1" y="5.5" width="1.8" height="6" fill="#fff"/><rect x="9.1" y="12.8" width="1.8" height="1.8" fill="#fff"/></svg>
<div class="t" style="left:0px;top:301px;font-size:12.4px;color:#1e1e1e;-webkit-text-stroke:0.4px #1e1e1e;left:auto;right:906px">$ 31.25</div>
<div class="a" style="left:349px;top:456px;width:31px;height:31px;border-radius:50%;background:#2d6294;color:#fff;font-size:14px;font-weight:bold;text-align:center;line-height:31px">DS</div>
<div class="t" style="left:390px;top:457.5px;font-size:13px;color:#2f6aa8;">David Stanley</div>
<div class="t" style="left:390px;top:475px;font-size:11px;color:#333;">Data Analyst</div>
<div class="t" style="left:0px;top:457px;font-size:12.4px;color:#1e1e1e;-webkit-text-stroke:0.4px #1e1e1e;left:auto;right:906px">$ 40.00</div>
<svg class="a" style="left:320px;top:522px" width="8" height="13"><path d="M0 0v12.5L7 6.25z" fill="#9a9a9a"/></svg>
<svg class="a" style="left:349.5px;top:518px" width="29.5" height="29.5" viewBox="0 0 30 30"><defs><clipPath id="av2"><circle cx="15" cy="15" r="15"/></clipPath><radialGradient id="av2g" cx=".5" cy=".45" r=".6"><stop offset="0" stop-color="#f4f4f4"/><stop offset="1" stop-color="#cfcfcf"/></radialGradient></defs><g clip-path="url(#av2)"><rect width="30" height="30" fill="url(#av2g)"/><path d="M3 31q1-6.5 7-7.5l5 1.5 5-1.5q6 1 7 7.5z" fill="#2b2b2b"/><path d="M10.5 23.5l4.5 7 4.5-7-4.5-1.5z" fill="#f5f5f5"/><path d="M14 24.5h2l.6 5.5h-3.2z" fill="#333"/><rect x="12.8" y="19" width="4.4" height="4.5" fill="#d9b3a1"/><ellipse cx="15" cy="14.2" rx="5.3" ry="6.8" fill="#e2c0b0"/><path d="M9.5 13q-.5-6.5 5.5-6.8 6 .3 5.5 6.8l-.8-3.5q-4.7-1.8-9.4 0z" fill="#2e2622"/><path d="M12 13.5h2M16 13.5h2" stroke="#6b5046" stroke-width=".8"/></g></svg>
<div class="t" style="left:390px;top:517.5px;font-size:13px;color:#2f6aa8;">Edmund Reynold</div>
<div class="t" style="left:390px;top:535px;font-size:11px;color:#333;">Data Analyst</div>
<svg class="a" style="left:514px;top:518px" width="20" height="17" viewBox="0 0 20 17"><path d="M10 .5L19.5 16.5H.5z" fill="#f47c5a" stroke="#f47c5a" stroke-linejoin="round"/><rect x="9.1" y="5.5" width="1.8" height="6" fill="#fff"/><rect x="9.1" y="12.8" width="1.8" height="1.8" fill="#fff"/></svg>
<div class="t" style="left:0px;top:517px;font-size:12.4px;color:#1e1e1e;-webkit-text-stroke:0.4px #1e1e1e;left:auto;right:906px">$ 80.00</div>
<svg class="a" style="left:320px;top:646px" width="8" height="13"><path d="M0 0v12.5L7 6.25z" fill="#9a9a9a"/></svg>
<div class="a" style="left:349px;top:640px;width:31px;height:31px;border-radius:50%;background:#2d6294;color:#fff;font-size:14px;font-weight:bold;text-align:center;line-height:31px">JB</div>
<div class="t" style="left:390px;top:643.5px;font-size:13px;color:#2f6aa8;">Jenny Bob</div>
<svg class="a" style="left:514px;top:642px" width="20" height="17" viewBox="0 0 20 17"><path d="M10 .5L19.5 16.5H.5z" fill="#f47c5a" stroke="#f47c5a" stroke-linejoin="round"/><rect x="9.1" y="5.5" width="1.8" height="6" fill="#fff"/><rect x="9.1" y="12.8" width="1.8" height="1.8" fill="#fff"/></svg>
<div class="t" style="left:0px;top:641px;font-size:12.4px;color:#1e1e1e;-webkit-text-stroke:0.4px #1e1e1e;left:auto;right:906px">$ 38.00</div>
<div class="a" style="left:299.5px;top:632.5px;width:420px;height:104px;border-left:1.3px solid #b9b9b9;border-top:1px solid #ececec;border-radius:4px 0 0 0"></div>
<div class="a" style="left:706px;top:232px;width:6px;height:38px;background:#b0b0b0;border-radius:3px"></div>
<div class="a" style="left:298px;top:727px;width:414px;height:8px;background:#fff;"></div>
<div class="a" style="left:300px;top:727px;width:315px;height:8px;background:#acacac;border-radius:4px"></div>
<div class="a" style="left:298px;top:734px;width:420px;height:2px;background:#a5a5a5;"></div>
<div class="a" style="left:712px;top:162px;width:6px;height:574px;background:linear-gradient(90deg,#7db0db,#9fc8e8 55%,#c6dff1);"></div>
<div class="a" style="left:712px;top:230px;width:6px;height:5px;background:#6aa3d3;"></div>
<div class="a" style="left:720px;top:162px;width:798px;height:573px;background:#fff;"></div>
<div class="a" style="left:780.3px;top:230px;width:1px;height:497px;background:#e6e6e6;"></div>
<div class="a" style="left:841.1px;top:230px;width:1px;height:497px;background:#e6e6e6;"></div>
<div class="a" style="left:902.0px;top:230px;width:1px;height:497px;background:#e6e6e6;"></div>
<div class="a" style="left:962.8px;top:230px;width:1px;height:497px;background:#e6e6e6;"></div>
<div class="a" style="left:1023.7px;top:230px;width:1px;height:497px;background:#e6e6e6;"></div>
<div class="a" style="left:1084.6px;top:230px;width:1px;height:497px;background:#e6e6e6;"></div>
<div class="a" style="left:1145.4px;top:230px;width:1px;height:497px;background:#e6e6e6;"></div>
<div class="a" style="left:1206.3px;top:230px;width:1px;height:497px;background:#e6e6e6;"></div>
<div class="a" style="left:1267.1px;top:230px;width:1px;height:497px;background:#e6e6e6;"></div>
<div class="a" style="left:1328.0px;top:230px;width:1px;height:497px;background:#e6e6e6;"></div>
<div class="a" style="left:1388.9px;top:230px;width:1px;height:497px;background:#e6e6e6;"></div>
<div class="a" style="left:1449.7px;top:230px;width:1px;height:497px;background:#e6e6e6;"></div>
<div class="a" style="left:1510.6px;top:230px;width:1px;height:497px;background:#e6e6e6;"></div>
<div class="a" style="left:720px;top:291px;width:798px;height:1.5px;background:#ebebeb;"></div>
<div class="a" style="left:720px;top:448px;width:798px;height:1.5px;background:#ebebeb;"></div>
<div class="a" style="left:720px;top:508px;width:798px;height:1.5px;background:#ebebeb;"></div>
<div class="a" style="left:720px;top:632px;width:798px;height:1.5px;background:#ebebeb;"></div>
<div class="a" style="left:720px;top:162px;width:798px;height:67px;background:#f4f4f4;box-shadow:0 1.5px 1.5px rgba(0,0,0,.28)"></div>
<div class="a" style="left:720px;top:188px;width:61px;height:40px;background:#c6dddd;"></div>
<div class="a" style="left:780.3px;top:188px;width:1px;height:41px;background:#e4e4e4;"></div>
<div class="a" style="left:841.1px;top:188px;width:1px;height:41px;background:#e4e4e4;"></div>
<div class="a" style="left:902.0px;top:188px;width:1px;height:41px;background:#e4e4e4;"></div>
<div class="a" style="left:962.8px;top:188px;width:1px;height:41px;background:#e4e4e4;"></div>
<div class="a" style="left:1023.7px;top:162px;width:1.5px;height:67px;background:#d4d4d4;"></div>
<div class="a" style="left:1084.6px;top:188px;width:1px;height:41px;background:#e4e4e4;"></div>
<div class="a" style="left:1145.4px;top:188px;width:1px;height:41px;background:#e4e4e4;"></div>
<div class="a" style="left:1206.3px;top:188px;width:1px;height:41px;background:#e4e4e4;"></div>
<div class="a" style="left:1267.1px;top:188px;width:1px;height:41px;background:#e4e4e4;"></div>
<div class="a" style="left:1328.0px;top:162px;width:1.5px;height:67px;background:#d4d4d4;"></div>
<div class="a" style="left:1388.9px;top:188px;width:1px;height:41px;background:#e4e4e4;"></div>
<div class="a" style="left:1449.7px;top:188px;width:1px;height:41px;background:#e4e4e4;"></div>
<div class="a" style="left:1510.6px;top:188px;width:1px;height:41px;background:#e4e4e4;"></div>
<div class="a" style="left:720px;top:188px;width:798px;height:41px;overflow:hidden">
<div class="dh" style="left:0.0px;top:7px;-webkit-text-stroke:0.45px #2424e0;color:#2424e0;">Mon</div>
<div class="dh" style="left:0.0px;top:25px;-webkit-text-stroke:0.45px #2424e0;color:#2424e0;">17</div>
<div class="dh" style="left:60.9px;top:7px;">Tue</div>
<div class="dh" style="left:60.9px;top:25px;">18</div>
<div class="dh" style="left:121.7px;top:7px;">Wed</div>
<div class="dh" style="left:121.7px;top:25px;">19</div>
<div class="dh" style="left:182.6px;top:7px;">Thu</div>
<div class="dh" style="left:182.6px;top:25px;">20</div>
<div class="dh" style="left:243.4px;top:7px;">Fri</div>
<div class="dh" style="left:243.4px;top:25px;">21</div>
<div class="dh" style="left:304.3px;top:7px;">Mon</div>
<div class="dh" style="left:304.3px;top:25px;">24</div>
<div class="dh" style="left:365.2px;top:7px;">Tue</div>
<div class="dh" style="left:365.2px;top:25px;">25</div>
<div class="dh" style="left:426.0px;top:7px;">Wed</div>
<div class="dh" style="left:426.0px;top:25px;">26</div>
<div class="dh" style="left:486.9px;top:7px;">Thu</div>
<div class="dh" style="left:486.9px;top:25px;">27</div>
<div class="dh" style="left:547.7px;top:7px;">Fri</div>
<div class="dh" style="left:547.7px;top:25px;">28</div>
<div class="dh" style="left:608.6px;top:7px;">Mon</div>
<div class="dh" style="left:608.6px;top:25px;">3</div>
<div class="dh" style="left:669.5px;top:7px;">Tue</div>
<div class="dh" style="left:669.5px;top:25px;">4</div>
<div class="dh" style="left:730.3px;top:7px;">Wed</div>
<div class="dh" style="left:730.3px;top:25px;">5</div>
<div class="dh" style="left:791.2px;top:7px;">Thu</div>
<div class="dh" style="left:791.2px;top:25px;">6</div>
</div>
<div class="a" style="left:720px;top:162px;width:798px;height:26px;overflow:hidden"><div class="t" style="left:0;width:304px;padding-left:4px;top:2.5px;text-align:center;font-size:11.9px;-webkit-text-stroke:0.35px #2b2bef;color:#2b2bef">FEB ' 25<span style="display:inline-block;width:1px;height:15px;background:#8c9ad8;vertical-align:-3.5px;margin:0 5px"></span>w8</div><div class="t" style="left:304px;width:304px;padding-left:6px;top:2.5px;text-align:center;font-size:11.9px;-webkit-text-stroke:0.35px #2b2bef;color:#2b2bef">FEB - MAR ' 25<span style="display:inline-block;width:1px;height:15px;background:#8c9ad8;vertical-align:-3.5px;margin:0 5px"></span>w9</div><div class="t" style="left:608px;width:304px;top:2.5px;text-align:center;font-size:11.9px;-webkit-text-stroke:0.35px #2b2bef;color:#2b2bef;padding-left:6px">MAR ' 25<span style="display:inline-block;width:1px;height:15px;background:#8c9ad8;vertical-align:-3.5px;margin:0 5px"></span>w10</div></div>
<div class="bar" style="left:720.0px;top:296px;width:798.0px;height:19.5px;background:#688765;box-shadow:inset 0 0 0 1px #5b7a57;"><svg class="a" style="left:0;top:0" width="798.0" height="19.5"><rect width="798.0" height="19.5" fill="url(#p0)"/></svg><div class="pill" style="background:rgba(255,255,255,.72);color:#3a3a3a;max-width:793.0px;top:1.8px">8 hr/day allocated</div></div>
<div class="bar" style="left:720.0px;top:323px;width:798.0px;height:18.5px;background:#d6e9f5;"><svg class="a" style="left:0;top:0" width="798.0" height="18.5"><rect width="798.0" height="18.5" fill="url(#p1)"/></svg><div class="pill" style="background:rgba(255,255,255,.6);color:#3a3a3a;max-width:793.0px;top:1.2px">0 hr/day free</div></div>
<div class="bar" style="left:720.0px;top:452px;width:798.0px;height:19.5px;background:#7a9ad0;box-shadow:inset 0 0 0 1px #7092cb;"><svg class="a" style="left:0;top:0" width="798.0" height="19.5"><rect width="798.0" height="19.5" fill="url(#p2)"/></svg><div class="pill" style="background:rgba(255,255,255,.78);color:#3a3a3a;max-width:793.0px;top:1.8px">0 hr/day allocated</div></div>
<div class="bar" style="left:720.0px;top:479px;width:798.0px;height:19px;background:#5481ad;box-shadow:inset 0 0 0 1px #4b76a3;"><svg class="a" style="left:0;top:0" width="798.0" height="19"><rect width="798.0" height="19" fill="url(#p3)"/></svg><div class="pill" style="background:rgba(255,255,255,.8);color:#3a3a3a;max-width:793.0px;top:1.5px">8 hr/day free</div></div>
<div class="bar" style="left:720.0px;top:513px;width:60.9px;height:19px;background:#8ea395;box-shadow:inset 0 0 0 1px #849a8b;"><svg class="a" style="left:0;top:0" width="60.9" height="19"><rect width="60.9" height="19" fill="url(#p4)"/></svg><div class="pill" style="background:rgba(255,255,255,.75);color:#3a3a3a;max-width:55.9px;top:1.5px">6.4 hr/day allocated</div></div>
<div class="bar" style="left:780.9px;top:513px;width:182.6px;height:19px;background:#8ea395;box-shadow:inset 0 0 0 1px #849a8b;"><svg class="a" style="left:0;top:0" width="182.6" height="19"><rect width="182.6" height="19" fill="url(#p4)"/></svg><div class="pill" style="background:rgba(255,255,255,.75);color:#3a3a3a;max-width:177.6px;top:1.5px">4.4 hr/day allocated</div></div>
<div class="bar" style="left:963.4px;top:513px;width:365.2px;height:19px;background:#7a9ad0;box-shadow:inset 0 0 0 1px #7092cb;"><svg class="a" style="left:0;top:0" width="365.2" height="19"><rect width="365.2" height="19" fill="url(#p5)"/></svg><div class="pill" style="background:rgba(255,255,255,.78);color:#3a3a3a;max-width:360.2px;top:1.5px">0 hr/day allocated</div></div>
<div class="bar" style="left:1328.6px;top:513px;width:60.9px;height:19px;background:#688765;box-shadow:inset 0 0 0 1px #5b7a57;"><svg class="a" style="left:0;top:0" width="60.9" height="19"><rect width="60.9" height="19" fill="url(#p6)"/></svg><div class="pill" style="background:rgba(255,255,255,.72);color:#3a3a3a;max-width:55.9px;top:1.5px">8 hr/day allocated</div></div>
<div class="bar" style="left:1389.5px;top:513px;width:128.5px;height:19px;background:#7a9ad0;box-shadow:inset 0 0 0 1px #7092cb;"><svg class="a" style="left:0;top:0" width="128.5" height="19"><rect width="128.5" height="19" fill="url(#p5)"/></svg><div class="pill" style="background:rgba(255,255,255,.78);color:#3a3a3a;max-width:123.5px;top:1.5px">0 hr/day allocated</div></div>
<div class="bar" style="left:720.0px;top:540px;width:60.9px;height:18.5px;background:#bcdff2;"><svg class="a" style="left:0;top:0" width="60.9" height="18.5"><rect width="60.9" height="18.5" fill="url(#p1)"/></svg><div class="pill" style="background:rgba(255,255,255,.55);color:#3a3a3a;max-width:55.9px;top:1.2px">1.6 hr/day free</div></div>
<div class="bar" style="left:780.9px;top:540px;width:182.6px;height:18.5px;background:#bcdff2;"><svg class="a" style="left:0;top:0" width="182.6" height="18.5"><rect width="182.6" height="18.5" fill="url(#p1)"/></svg><div class="pill" style="background:rgba(255,255,255,.55);color:#3a3a3a;max-width:177.6px;top:1.2px">3.6 hr/day free</div></div>
<div class="bar" style="left:963.4px;top:540px;width:365.2px;height:18.5px;background:#5481ad;box-shadow:inset 0 0 0 1px #4b76a3;"><svg class="a" style="left:0;top:0" width="365.2" height="18.5"><rect width="365.2" height="18.5" fill="url(#p7)"/></svg><div class="pill" style="background:rgba(255,255,255,.8);color:#3a3a3a;max-width:360.2px;top:1.2px">8 hr/day free</div></div>
<div class="bar" style="left:1328.6px;top:540px;width:60.9px;height:18.5px;background:#dcedf8;"><svg class="a" style="left:0;top:0" width="60.9" height="18.5"><rect width="60.9" height="18.5" fill="url(#p1)"/></svg><div class="pill" style="background:rgba(255,255,255,.55);color:#3a3a3a;max-width:55.9px;top:1.2px">0 hr/day free</div></div>
<div class="bar" style="left:1389.5px;top:540px;width:128.5px;height:18.5px;background:#5481ad;box-shadow:inset 0 0 0 1px #4b76a3;"><svg class="a" style="left:0;top:0" width="128.5" height="18.5"><rect width="128.5" height="18.5" fill="url(#p7)"/></svg><div class="pill" style="background:rgba(255,255,255,.8);color:#3a3a3a;max-width:123.5px;top:1.2px">8 hr/day free</div></div>
<div class="bar" style="left:720.0px;top:637px;width:121.7px;height:19px;background:#7a9ad0;box-shadow:inset 0 0 0 1px #7092cb;"><svg class="a" style="left:0;top:0" width="121.7" height="19"><rect width="121.7" height="19" fill="url(#p5)"/></svg><div class="pill" style="background:rgba(255,255,255,.78);color:#3a3a3a;max-width:116.7px;top:1.5px">0 hr/day allocated</div></div>
<div class="bar" style="left:841.7px;top:637px;width:304.3px;height:19px;background:#688765;box-shadow:inset 0 0 0 1px #5b7a57;"><svg class="a" style="left:0;top:0" width="304.3" height="19"><rect width="304.3" height="19" fill="url(#p6)"/></svg><div class="pill" style="background:rgba(255,255,255,.72);color:#3a3a3a;max-width:299.3px;top:1.5px">8 hr/day allocated</div></div>
<div class="bar" style="left:1146.0px;top:637px;width:182.6px;height:19px;background:#7a9ad0;box-shadow:inset 0 0 0 1px #7092cb;"><svg class="a" style="left:0;top:0" width="182.6" height="19"><rect width="182.6" height="19" fill="url(#p5)"/></svg><div class="pill" style="background:rgba(255,255,255,.78);color:#3a3a3a;max-width:177.6px;top:1.5px">0 hr/day allocated</div></div>
<div class="bar" style="left:1328.6px;top:637px;width:60.9px;height:19px;background:#b45a3a;box-shadow:inset 0 0 0 1px #a9522f;"><svg class="a" style="left:0;top:0" width="60.9" height="19"><rect width="60.9" height="19" fill="url(#p8)"/></svg><div class="pill" style="background:rgba(255,255,255,.78);color:#3a3a3a;max-width:55.9px;top:1.5px">16 hr/day allocated</div></div>
<div class="bar" style="left:1389.5px;top:637px;width:128.5px;height:19px;background:#688765;box-shadow:inset 0 0 0 1px #5b7a57;"><svg class="a" style="left:0;top:0" width="128.5" height="19"><rect width="128.5" height="19" fill="url(#p6)"/></svg><div class="pill" style="background:rgba(255,255,255,.72);color:#3a3a3a;max-width:123.5px;top:1.5px">8 hr/day allocated</div></div>
<div class="bar" style="left:720.0px;top:662px;width:121.7px;height:19px;background:#5481ad;box-shadow:inset 0 0 0 1px #4b76a3;"><svg class="a" style="left:0;top:0" width="121.7" height="19"><rect width="121.7" height="19" fill="url(#p3)"/></svg><div class="pill" style="background:rgba(255,255,255,.8);color:#3a3a3a;max-width:116.7px;top:1.5px">8 hr/day free</div></div>
<div class="bar" style="left:841.7px;top:662px;width:304.3px;height:19px;background:#d6e9f5;"><svg class="a" style="left:0;top:0" width="304.3" height="19"><rect width="304.3" height="19" fill="url(#p9)"/></svg><div class="pill" style="background:rgba(255,255,255,.6);color:#3a3a3a;max-width:299.3px;top:1.5px">0 hr/day free</div></div>
<div class="bar" style="left:1146.0px;top:662px;width:182.6px;height:19px;background:#5481ad;box-shadow:inset 0 0 0 1px #4b76a3;"><svg class="a" style="left:0;top:0" width="182.6" height="19"><rect width="182.6" height="19" fill="url(#p3)"/></svg><div class="pill" style="background:rgba(255,255,255,.8);color:#3a3a3a;max-width:177.6px;top:1.5px">8 hr/day free</div></div>
<div class="bar" style="left:1328.6px;top:662px;width:60.9px;height:19px;background:#ee3d41;box-shadow:inset 0 0 0 1px #e6353a;"><svg class="a" style="left:0;top:0" width="60.9" height="19"><rect width="60.9" height="19" fill="url(#p8)"/></svg><div class="pill" style="background:rgba(255,255,255,.8);color:#3a3a3a;max-width:55.9px;top:1.5px">8 hr/day free</div></div>
<div class="bar" style="left:1389.5px;top:662px;width:128.5px;height:19px;background:#d6e9f5;"><svg class="a" style="left:0;top:0" width="128.5" height="19"><rect width="128.5" height="19" fill="url(#p9)"/></svg><div class="pill" style="background:rgba(255,255,255,.6);color:#3a3a3a;max-width:123.5px;top:1.5px">0 hr/day free</div></div>
<div class="a" style="left:720px;top:347px;width:798px;height:28px;background:#2c5f81;border-radius:5px 0 0 5px;box-shadow:0 2px 2px rgba(0,0,0,.2)"></div>
<div class="t" style="left:726px;top:356px;font-size:11.3px;color:#fff;">Cloud Migration</div>
<svg class="a" style="left:811px;top:349.5px" width="58" height="18" viewBox="0 0 58 18"><circle cx="9.0" cy="9" r="8.5" fill="#fff"/><circle cx="28.5" cy="9" r="8.5" fill="#fff"/><circle cx="48.0" cy="9" r="8.5" fill="#fff"/><path d="M9 3.6l1.6 3.5 3.8.4-2.9 2.6.9 3.7L9 11.9l-3.4 1.9.9-3.7-2.9-2.6 3.8-.4z" fill="#5f8290"/><path d="M28.5 4l5 9h-10z" fill="#e8143c"/><rect x="44.3" y="4.8" width="8.4" height="8.4" rx=".8" fill="none" stroke="#333" stroke-width="1.2"/></svg>
<div class="a" style="left:720px;top:565px;width:59px;height:27.5px;background:#6e9b3d;border-radius:4px;box-shadow:0 2px 2px rgba(0,0,0,.2)"></div>
<div class="a" style="left:1329px;top:565px;width:59px;height:27.5px;background:#b55668;border-radius:4px;box-shadow:0 2px 2px rgba(0,0,0,.2)"></div>
<div class="a" style="left:720px;top:597px;width:242px;height:28px;background:#258a8f;border-radius:5px;box-shadow:0 2px 2px rgba(0,0,0,.2)"></div>
<div class="t" style="left:726px;top:606px;font-size:11.5px;color:#fff;">Airport Construction</div>
<svg class="a" style="left:834px;top:599px" width="58" height="18" viewBox="0 0 58 18"><circle cx="9.0" cy="9" r="8.5" fill="#fff"/><circle cx="28.5" cy="9" r="8.5" fill="#fff"/><circle cx="48.0" cy="9" r="8.5" fill="#fff"/><path d="M9 3.6l1.6 3.5 3.8.4-2.9 2.6.9 3.7L9 11.9l-3.4 1.9.9-3.7-2.9-2.6 3.8-.4z" fill="none" stroke="#222" stroke-width="0.95"/><path d="M28.5 4l5 9h-10z" fill="#e8143c"/><rect x="44.3" y="4.8" width="8.4" height="8.4" rx=".8" fill="none" stroke="#333" stroke-width="1.2"/></svg>
<div class="a" style="left:842px;top:687px;width:302px;height:28px;background:#6f9e41;border-radius:5px;box-shadow:0 2px 2px rgba(0,0,0,.2)"></div>
<div class="t" style="left:848px;top:696px;font-size:11px;color:#fff;">ERP system implementation for Financial...</div>
<svg class="a" style="left:1062px;top:689px" width="58" height="18" viewBox="0 0 58 18"><circle cx="9.0" cy="9" r="8.5" fill="#fff"/><circle cx="28.5" cy="9" r="8.5" fill="#fff"/><circle cx="48.0" cy="9" r="8.5" fill="#fff"/><path d="M9 3.6l1.6 3.5 3.8.4-2.9 2.6.9 3.7L9 11.9l-3.4 1.9.9-3.7-2.9-2.6 3.8-.4z" fill="none" stroke="#222" stroke-width="0.95"/><path d="M28.5 4l5 9h-10z" fill="#e8143c"/><rect x="44.3" y="4.8" width="8.4" height="8.4" rx=".8" fill="none" stroke="#333" stroke-width="1.2"/></svg>
<div class="a" style="left:1329px;top:687px;width:60px;height:28px;background:#f05252;border-radius:5px;box-shadow:0 2px 2px rgba(0,0,0,.2)"></div>
<div class="a" style="left:1451px;top:687px;width:67px;height:28px;background:#467f93;border-radius:5px 0 0 5px;overflow:hidden"><div class="t" style="left:6px;top:8.5px;font-size:11.6px;color:#fff">02. Small Centre</div></div>
<div class="a" style="left:1329px;top:721px;width:120px;height:14px;overflow:hidden"><div class="a" style="left:0;top:0;width:120px;height:28px;background:linear-gradient(90deg,#f05252 0 60px,#b55668 60px);border-radius:5px"></div><svg class="a" style="left:38px;top:1px" width="58" height="18" viewBox="0 0 58 18"><circle cx="9.0" cy="9" r="8.5" fill="#fff"/><circle cx="28.5" cy="9" r="8.5" fill="#fff"/><circle cx="48.0" cy="9" r="8.5" fill="#fff"/><path d="M9 3.6l1.6 3.5 3.8.4-2.9 2.6.9 3.7L9 11.9l-3.4 1.9.9-3.7-2.9-2.6 3.8-.4z" fill="#5f8290"/><path d="M28.5 4l5 9h-10z" fill="#e8143c"/><rect x="44.3" y="4.8" width="8.4" height="8.4" rx=".8" fill="none" stroke="#333" stroke-width="1.2"/></svg></div>
<div class="a" style="left:1451px;top:721px;width:67px;height:14px;overflow:hidden"><div class="a" style="left:0;top:0;width:67px;height:28px;background:#467f93;border-radius:5px 0 0 5px"></div></div>
<div class="a" style="left:720px;top:727px;width:798px;height:8px;background:#fff;"></div>
<div class="a" style="left:720px;top:727px;width:317px;height:8px;background:#acacac;border-radius:4px"></div>
<div class="a" style="left:720px;top:734px;width:798px;height:2px;background:#a5a5a5;"></div></body></html>
